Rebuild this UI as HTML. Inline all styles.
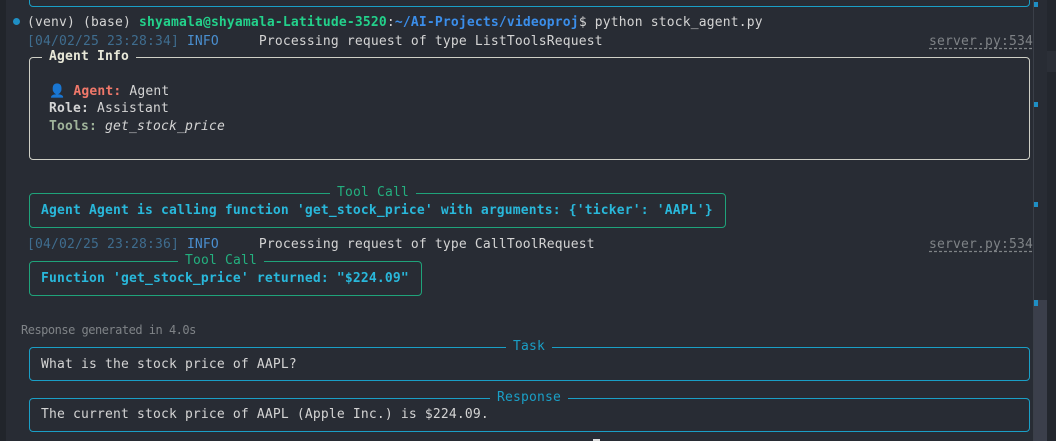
<!DOCTYPE html>
<html><head><meta charset="utf-8"><style>
*{margin:0;padding:0;box-sizing:border-box}
body{width:1056px;height:441px;background:#282c34;overflow:hidden;position:relative;font-family:"DejaVu Sans Mono","Liberation Mono",monospace;font-size:13px;letter-spacing:0.17px;color:#d4d4d4}
.t{position:absolute;white-space:pre;line-height:16px}
.box{position:absolute;border:1px solid;border-radius:4px}
.ttl{position:absolute;top:-9px;background:#282c34;padding:0 7px;white-space:pre;line-height:16px}
b{font-weight:bold}
</style></head><body>
<div style="position:absolute;left:0;top:0;width:6px;height:441px;background:#21252b"></div>
<div class="box" style="left:29px;top:-10px;width:1001px;height:17px;border-color:#1a9fc6"></div>
<div style="position:absolute;left:13px;top:18px;width:7px;height:7px;border-radius:50%;background:#1f8fc4"></div>
<div class="t" style="left:27px;top:15px">(venv) (base) <b style="color:#23d18b">shyamala@shyamala-Latitude-3520</b>:<b style="color:#3b8eea">~/AI-Projects/videoproj</b>$ python stock_agent.py</div>
<div class="t" style="left:27px;top:34px"><span style="color:#3f6d8f">[04/02/25 23:28:34]</span> <span style="color:#4a8fd0">INFO</span>     Processing request of type ListToolsRequest</div>
<div class="t" style="left:929px;top:34px;color:#7f8387;text-decoration:underline dashed;text-underline-offset:3px">server.py:534</div>
<div class="box" style="left:29px;top:57px;width:1001px;height:103px;border-color:#cfd0c6">
 <div class="ttl" style="left:12px;color:#e8e8d8"><b>Agent Info</b></div>
</div>
<div class="t" style="left:49px;top:84px">👤 <b style="color:#f0786a">Agent:</b> Agent</div>
<div class="t" style="left:49px;top:101px"><b>Role:</b> Assistant</div>
<div class="t" style="left:49px;top:119px"><b style="color:#9fb39a">Tools:</b> <i>get_stock_price</i></div>
<div class="box" style="left:29px;top:193px;width:697px;height:35px;border-color:#1fa37a">
 <div class="ttl" style="left:300px;color:#23b07f">Tool Call</div>
</div>
<div class="t" style="left:41px;top:203px;color:#29b8db"><b>Agent Agent is calling function 'get_stock_price' with arguments: {'ticker': 'AAPL'}</b></div>
<div class="t" style="left:27px;top:237px"><span style="color:#3f6d8f">[04/02/25 23:28:36]</span> <span style="color:#4a8fd0">INFO</span>     Processing request of type CallToolRequest</div>
<div class="t" style="left:929px;top:237px;color:#7f8387;text-decoration:underline dashed;text-underline-offset:3px">server.py:534</div>
<div class="box" style="left:29px;top:261px;width:393px;height:35px;border-color:#1fa37a">
 <div class="ttl" style="left:148px;color:#23b07f">Tool Call</div>
</div>
<div class="t" style="left:41px;top:271px;color:#29b8db"><b>Function 'get_stock_price' returned: "$224.09"</b></div>
<div class="t" style="left:21px;top:322px;color:#7f8387;font-size:12px;letter-spacing:-0.5px">Response generated in 4.0s</div>
<div class="box" style="left:29px;top:347px;width:1001px;height:34px;border-color:#1a9fc6">
 <div class="ttl" style="left:476px;color:#1a9fc6">Task</div>
</div>
<div class="t" style="left:41px;top:357px">What is the stock price of AAPL?</div>
<div class="box" style="left:29px;top:398px;width:1001px;height:34px;border-color:#1a9fc6">
 <div class="ttl" style="left:460px;color:#1a9fc6">Response</div>
</div>
<div class="t" style="left:41px;top:407px">The current stock price of AAPL (Apple Inc.) is $224.09.</div>
<div style="position:absolute;left:593px;top:439px;width:7px;height:2px;background:#ddd"></div>
<div style="position:absolute;left:1033px;top:0;width:1px;height:441px;background:#3a3f48"></div>
<div style="position:absolute;left:1034px;top:300px;width:13px;height:141px;background:#3b3f4b"></div>
<div style="position:absolute;left:1047px;top:0;width:9px;height:441px;background:#23272e"></div>
<div style="position:absolute;left:1047px;top:51px;width:9px;height:21px;background:#2b2f37"></div>
<div style="position:absolute;left:1034px;top:2px;width:4px;height:5px;background:#1f8fc4"></div>
<div style="position:absolute;left:1034px;top:102px;width:4px;height:5px;background:#1f8fc4"></div>
<div style="position:absolute;left:1034px;top:202px;width:4px;height:5px;background:#1f8fc4"></div>
<div style="position:absolute;left:1034px;top:300px;width:4px;height:6px;background:#1f8fc4"></div>
</body></html>
